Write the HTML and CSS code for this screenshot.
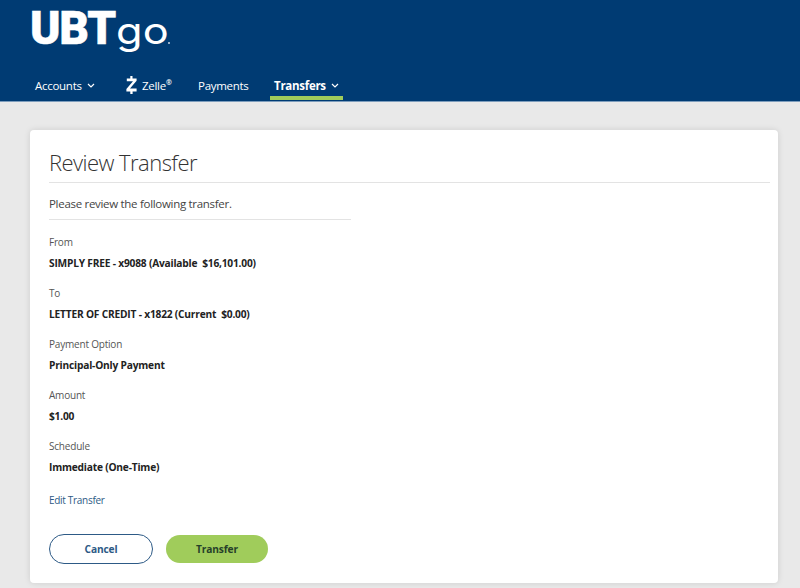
FILE: index.html
```html
<!DOCTYPE html>
<html lang="en">
<head>
  <meta charset="UTF-8">
  <meta name="viewport" content="width=device-width, initial-scale=1.0">
  <title>Review Transfer</title>
  <link rel="stylesheet" href="styles.css">
</head>
<body>
  <header class="top">
    <div class="logo"><span class="logo-ubt">UBT</span><span class="logo-go">go</span><span class="logo-dot"></span></div>
    <nav class="menu">
      <a class="menu-item menu-accounts">Accounts
        <svg class="caret" viewBox="0 0 8 5"><path d="M1 1l3 3 3-3" fill="none" stroke="currentColor" stroke-width="1.2"/></svg>
      </a>
      <a class="menu-item menu-zelle">
        <svg class="zelle-mark" viewBox="0 0 11 18"><path d="M4.3 0h2.2v2.4H10.6v2.3L4 12.6h6.6v3H6.6V18H4.3v-2.4H.4v-2.5L7 5.3H.8V2.4h3.5z" fill="currentColor"/></svg>
        <span>Zelle<sup class="reg">®</sup></span>
      </a>
      <a class="menu-item menu-payments">Payments</a>
      <a class="menu-item menu-transfers">Transfers
        <svg class="caret" viewBox="0 0 8 5"><path d="M1 1l3 3 3-3" fill="none" stroke="currentColor" stroke-width="1.2"/></svg>
      </a>
    </nav>
  </header>

  <main class="card">
    <h1 class="title">Review Transfer</h1>
    <p class="intro">Please review the following transfer.</p>

    <div class="field">
      <div class="field-label">From</div>
      <div class="field-value">SIMPLY FREE - x9088 (Available&nbsp; $16,101.00)</div>
    </div>
    <div class="field">
      <div class="field-label">To</div>
      <div class="field-value">LETTER OF CREDIT - x1822 (Current&nbsp; $0.00)</div>
    </div>
    <div class="field">
      <div class="field-label">Payment Option</div>
      <div class="field-value">Principal-Only Payment</div>
    </div>
    <div class="field">
      <div class="field-label">Amount</div>
      <div class="field-value">$1.00</div>
    </div>
    <div class="field">
      <div class="field-label">Schedule</div>
      <div class="field-value">Immediate (One-Time)</div>
    </div>

    <a class="edit-link">Edit Transfer</a>

    <div class="actions">
      <button class="btn btn-cancel">Cancel</button>
      <button class="btn btn-transfer">Transfer</button>
    </div>
  </main>
</body>
</html>
```

FILE: styles.css
```css
html, body {
  height: 100%;
}
body {
  background-color: #e9e9e9;
  color: #2b2b2b;
  font-family: "Open Sans", Arial, sans-serif;
  margin: 0;
  padding: 0;
  overflow: hidden;
}
.top {
  background-color: #003b73;
  height: 102px;
  box-sizing: border-box;
  padding: 6px 0 0 30px;
  border-bottom: 1px solid #7d9dbc;
}
.logo {
  display: flex;
  align-items: baseline;
  height: 64px;
  color: white;
  font-family: Roboto, Arial, sans-serif;
  line-height: 44px;
}
.logo-ubt {
  font-size: 46px;
  font-weight: 900;
  letter-spacing: -1.2px;
  -webkit-text-stroke: 0.5px white;
}
.logo-go {
  display: inline-block;
  font-family: Inter, Arial, sans-serif;
  font-size: 37px;
  font-weight: 400;
  margin-left: 1px;
  letter-spacing: 0.2px;
  transform: scaleX(1.17);
  transform-origin: left;
}
.logo-dot {
  width: 2px;
  height: 2px;
  margin-left: 7px;
  border-radius: 50%;
  background-color: #c9d6e3;
}
.menu {
  display: flex;
  height: 30px;
  margin-left: 1px;
  color: white;
  font-size: 11.5px;
}
.menu-item {
  display: flex;
  align-items: center;
  box-sizing: border-box;
  height: 30px;
  letter-spacing: -0.28px;
}
.menu-accounts {
  margin-left: 4px;
  width: 91px;
}
.menu-zelle {
  width: 72px;
  gap: 5px;
}
.menu-payments {
  width: 72px;
}
.menu-transfers {
  width: 73px;
  padding-left: 4px;
  padding-top: 4px;
  font-weight: 700;
  border-bottom: 4px solid #a0cc5b;
}
.caret {
  width: 8px;
  height: 5px;
  margin-left: 5px;
}
.zelle-mark {
  width: 11px;
  height: 18px;
}
.reg {
  font-size: 7px;
  font-weight: 700;
  line-height: 0;
}
.card {
  background-color: white;
  box-sizing: border-box;
  width: 748px;
  height: 453px;
  margin: 28px 0 0 30px;
  padding: 17px 8px 0 19px;
  border-radius: 4px;
  box-shadow: 0 0 6px rgba(0, 0, 0, 0.12);
}
.title {
  margin: 0;
  height: 35px;
  line-height: 30px;
  font-size: 22px;
  font-weight: 300;
  letter-spacing: -0.55px;
  color: #333;
  border-bottom: 1px solid #e3e3e3;
}
.intro {
  margin: 0 0 14px;
  width: 302px;
  height: 37px;
  line-height: 41px;
  font-size: 11.5px;
  color: #444;
  border-bottom: 1px solid #e3e3e3;
  box-sizing: border-box;
  letter-spacing: -0.3px;
}
.field {
  height: 51px;
}
.field-label {
  font-size: 10px;
  line-height: 16px;
  letter-spacing: -0.2px;
  color: #555;
}
.field-value {
  margin-top: 5px;
  font-size: 10.2px;
  line-height: 16px;
  letter-spacing: -0.2px;
  font-weight: 700;
  color: #222;
}
.edit-link {
  display: block;
  margin-top: 3px;
  font-size: 10px;
  line-height: 16px;
  letter-spacing: -0.3px;
  color: #2d5a86;
}
.actions {
  display: flex;
  gap: 13px;
  margin-top: 26px;
}
.btn {
  width: 104px;
  height: 30px;
  border-radius: 16px;
  font-family: "Open Sans", Arial, sans-serif;
  font-size: 10.2px;
  font-weight: 700;
  letter-spacing: -0.15px;
  padding: 0;
}
.btn-cancel {
  background-color: white;
  border: 1px solid #2d5a86;
  color: #2d5a86;
}
.btn-transfer {
  background-color: #a0cc5b;
  border: none;
  color: #26402a;
  width: 102px;
  height: 28px;
  margin-top: 1px;
}
```
